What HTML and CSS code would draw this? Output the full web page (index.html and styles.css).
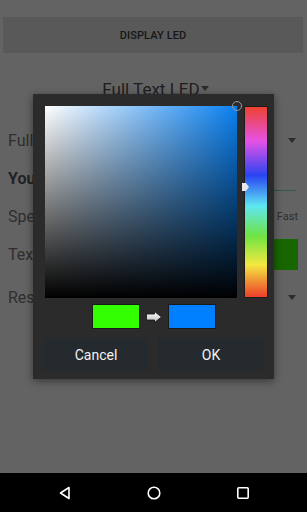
FILE: index.html
```html
<!DOCTYPE html>
<html lang="en">
<head>
  <meta charset="UTF-8" />
  <meta name="viewport" content="width=device-width, initial-scale=1.0"/>
  <title>LED Scroller</title>
  <link rel="stylesheet" href="styles.css">
</head>
<body>
  <div class="app">
    <button class="display-btn">DISPLAY LED</button>

    <div class="mode-title">Full Text LED<span class="caret"></span></div>

    <div class="row first">
      <span>Full Text LED</span>
      <span class="caret"></span>
    </div>
    <div class="row">
      <span class="bold">Your text</span>
      <span class="underline"></span>
    </div>
    <div class="row">
      <span>Speed</span>
      <span class="fast">Fast</span>
    </div>
    <div class="row">
      <span>Text color</span>
      <span class="color-box"></span>
    </div>
    <div class="row last">
      <span>Resolution</span>
      <span class="caret"></span>
    </div>
  </div>

  <div class="navbar">
    <svg width="14" height="14" viewBox="0 0 14 14"><path d="M11 1.5 L2.5 7 L11 12.5 Z" fill="none" stroke="#fff" stroke-width="1.6" stroke-linejoin="round"/></svg>
    <svg width="14" height="14" viewBox="0 0 14 14"><circle cx="7" cy="7" r="5.8" fill="none" stroke="#fff" stroke-width="1.6"/></svg>
    <svg width="14" height="14" viewBox="0 0 14 14"><rect x="1.8" y="1.8" width="10.4" height="10.4" rx="1" fill="none" stroke="#fff" stroke-width="1.6"/></svg>
  </div>

  <div class="dialog">
    <div class="picker">
      <div class="sv-box">
        <span class="sv-cursor"></span>
      </div>
      <div class="hue-bar">
        <span class="hue-cursor"></span>
      </div>
    </div>

    <div class="swatches">
      <span class="swatch old"></span>
      <svg width="16" height="12" viewBox="0 0 16 12">
        <defs>
          <linearGradient id="arr" x1="0" y1="0" x2="0" y2="1">
            <stop offset="0" stop-color="#ffffff"/>
            <stop offset="1" stop-color="#bdbdbd"/>
          </linearGradient>
        </defs>
        <path d="M0.5 3 H8.5 V0.5 L15.5 6 L8.5 11.5 V9 H0.5 Z" fill="url(#arr)" stroke="#111" stroke-width="0.8"/>
      </svg>
      <span class="swatch new"></span>
    </div>

    <div class="actions">
      <button>Cancel</button>
      <button>OK</button>
    </div>
  </div>
</body>
</html>
```

FILE: styles.css
```css
* {
  box-sizing: border-box;
  margin: 0;
  padding: 0;
}

body {
  width: 307px;
  height: 512px;
  overflow: hidden;
  background: #636363;
  font-family: Roboto, 'Noto Sans', sans-serif;
  color: #2e2e2e;
  display: flex;
  flex-direction: column;
}

.app {
  flex: 1;
  display: flex;
  flex-direction: column;
  padding-top: 17px;
}

.display-btn {
  height: 36px;
  margin: 0 4px 0 3px;
  border: none;
  background: #595959;
  color: #161616;
  font-family: Roboto, sans-serif;
  font-size: 11px;
  font-weight: 500;
  letter-spacing: 0.1px;
}

.mode-title {
  margin-top: 26px;
  text-align: center;
  font-size: 17px;
  color: #1e1e1e;
  line-height: 20px;
  padding-left: 4px;
}

.mode-title .caret {
  margin-left: 1px;
  vertical-align: 4px;
}

.caret {
  display: inline-block;
  width: 0;
  height: 0;
  border-left: 4px solid transparent;
  border-right: 4px solid transparent;
  border-top: 5px solid #2b2b2b;
}

.row {
  display: flex;
  align-items: center;
  justify-content: space-between;
  padding: 0 11px 0 8px;
  font-size: 16px;
  height: 38px;
}

.row.first {
  margin-top: 22px;
}

.row.last {
  margin-top: 5px;
}

.bold {
  font-weight: bold;
  color: #232323;
}

.underline {
  align-self: flex-end;
  margin-bottom: 6px;
  width: 24px;
  height: 1px;
  background: #2e5a55;
}

.fast {
  font-size: 11px;
  color: #2e2e2e;
  margin-right: -2px;
}

.color-box {
  width: 25px;
  height: 31px;
  background: #176600;
  margin-right: -2px;
}

.navbar {
  height: 39px;
  background: #000;
  display: flex;
  align-items: center;
  justify-content: center;
  gap: 75px;
}

.dialog {
  position: absolute;
  left: 33px;
  top: 94px;
  width: 241px;
  height: 285px;
  background: #2b2b2b;
  box-shadow: 0 2px 8px rgba(0, 0, 0, 0.45);
  padding: 12px 6px 8px 10px;
  display: flex;
  flex-direction: column;
}

.picker {
  display: flex;
  gap: 7px;
  padding-left: 2px;
}

.sv-box {
  position: relative;
  width: 192px;
  height: 192px;
  background:
    linear-gradient(to top, #000, rgba(0, 0, 0, 0)),
    linear-gradient(to right, #fff, #0a80f0);
}

.sv-cursor {
  position: absolute;
  right: -5px;
  top: -5px;
  width: 10px;
  height: 10px;
  border-radius: 50%;
  border: 1.5px solid #9a9a9a;
}

.hue-bar {
  position: relative;
  width: 24px;
  height: 192px;
  border: 1px solid #1c1c1c;
  background: linear-gradient(to bottom,
    #ee4230 0%, #e552e6 18%, #2a44f2 36%, #5ee6f2 52%,
    #70e442 68%, #f2e840 83%, #ee3e2a 100%);
}

.hue-cursor {
  position: absolute;
  left: -3px;
  top: 76px;
  width: 7px;
  height: 8px;
  background: #e8e8e8;
  clip-path: polygon(0 0, 55% 0, 100% 50%, 55% 100%, 0 100%);
}

.swatches {
  margin-top: 6px;
  display: flex;
  align-items: center;
  justify-content: center;
  gap: 6px;
  padding-right: 4px;
}

.swatch {
  width: 48px;
  height: 25px;
  border: 1px solid #1a1a1a;
}

.swatch.old {
  background: #33ff00;
}

.swatch.new {
  background: #0080ff;
}

.actions {
  margin-top: 9px;
  display: flex;
  gap: 9px;
  padding-right: 4px;
}

.actions button {
  flex: 1;
  height: 33px;
  border: none;
  border-radius: 2px;
  background: #252a2e;
  color: #f2f2f2;
  font-family: Roboto, sans-serif;
  font-size: 14px;
}
```
